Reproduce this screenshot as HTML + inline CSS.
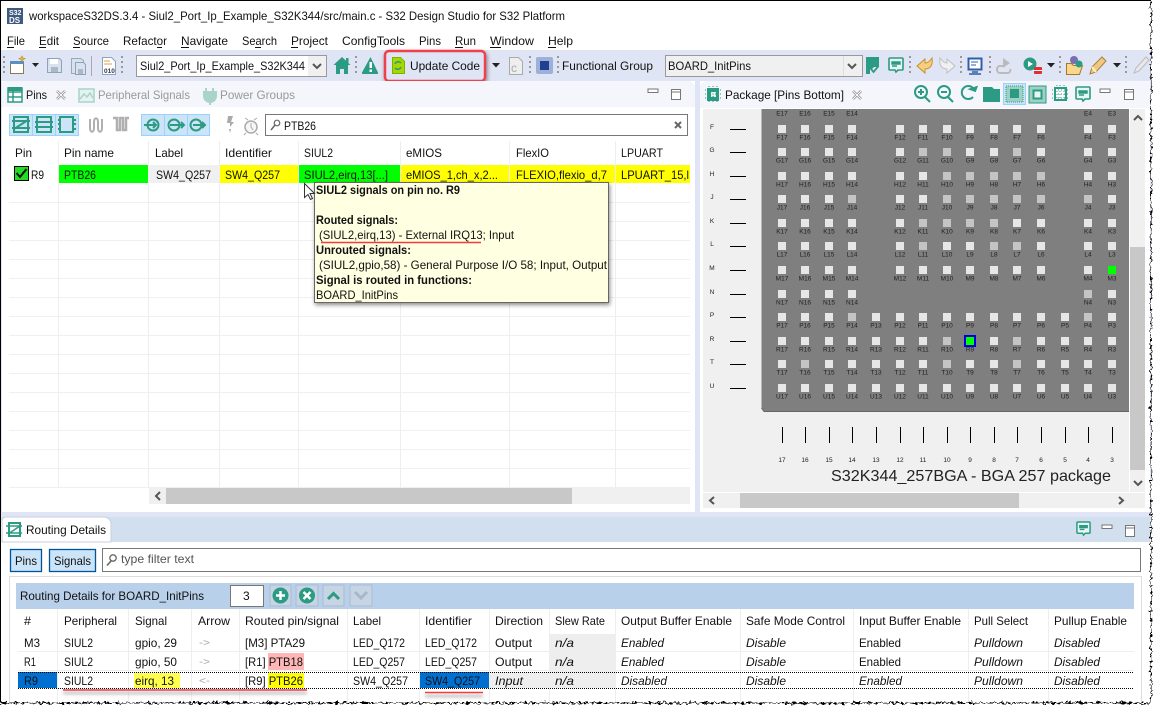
<!DOCTYPE html>
<html><head><meta charset="utf-8"><title>S32 Design Studio</title>
<style>
html,body{margin:0;padding:0;background:#fff;overflow:hidden}
svg{position:absolute;left:0;top:0;display:block}
text{font-family:"Liberation Sans",sans-serif;font-size:12px;fill:#111}
.i{font-style:italic}.b{font-weight:bold}.g{fill:#999}.a{fill:#aaa;font-size:10px}
rect.p{width:8px;height:8px;y:-4px;fill:#e6e6e6}
rect.d{fill:#c4c4c4}
text.l{font-size:6.5px;text-anchor:middle;fill:#222}
.gr{stroke:#999;stroke-width:2;stroke-dasharray:2 3;fill:none}
.t{fill:#2b9b83}.ts{stroke:#2b9b83;fill:none;stroke-width:2}
</style></head><body>
<svg width="1155" height="707" viewBox="0 0 1155 707" xmlns="http://www.w3.org/2000/svg">
<defs>
<filter id="tear" x="-2%" y="-2%" width="104%" height="104%"><feTurbulence type="fractalNoise" baseFrequency="0.3" numOctaves="2" seed="4"/><feDisplacementMap in="SourceGraphic" scale="6" xChannelSelector="R" yChannelSelector="G"/></filter>
<filter id="sh" x="-20%" y="-20%" width="140%" height="150%"><feDropShadow dx="1" dy="2" stdDeviation="2" flood-color="#000" flood-opacity=".45"/></filter>
<filter id="bl" x="-5%" y="-300%" width="110%" height="700%"><feGaussianBlur stdDeviation="1.5"/></filter>
<symbol id="note" viewBox="0 0 16 16" overflow="visible"><path d="M2 1h12a1 1 0 0 1 1 1v10a1 1 0 0 1-1 1H10l-2 2-1-2H2a1 1 0 0 1-1-1V2a1 1 0 0 1 1-1z" fill="#e8f5f2" stroke="#2b9b83" stroke-width="1.6"/><path d="M4 5h8v2H4zM4 9h5" stroke="#2b9b83" stroke-width="1.4" fill="#2b9b83"/></symbol>
</defs>

<!-- background bands -->
<rect width="1155" height="707" fill="#fff"/>
<rect x="0" y="50" width="1155" height="470" fill="#dfe5f4"/>

<!-- title bar -->
<rect x="7" y="8" width="16" height="16" fill="#3d5a80"/>
<text x="9" y="15" style="font-size:7px;fill:#fff;font-weight:bold">S32</text>
<text x="9" y="23" style="font-size:8px;fill:#fff;font-weight:bold">DS</text>
<text x="29" y="20" textLength="536" lengthAdjust="spacingAndGlyphs">workspaceS32DS.3.4 - Siul2_Port_Ip_Example_S32K344/src/main.c - S32 Design Studio for S32 Platform</text>

<!-- menu -->
<text x="7" y="45" textLength="18" lengthAdjust="spacingAndGlyphs">File</text>
<text x="39" y="45" textLength="20" lengthAdjust="spacingAndGlyphs">Edit</text>
<text x="73" y="45" textLength="36" lengthAdjust="spacingAndGlyphs">Source</text>
<text x="123" y="45" textLength="44" lengthAdjust="spacingAndGlyphs">Refactor</text>
<text x="181" y="45" textLength="47" lengthAdjust="spacingAndGlyphs">Navigate</text>
<text x="242" y="45" textLength="35" lengthAdjust="spacingAndGlyphs">Search</text>
<text x="291" y="45" textLength="37" lengthAdjust="spacingAndGlyphs">Project</text>
<text x="342" y="45" textLength="63" lengthAdjust="spacingAndGlyphs">ConfigTools</text>
<text x="419" y="45" textLength="22" lengthAdjust="spacingAndGlyphs">Pins</text>
<text x="455" y="45" textLength="21" lengthAdjust="spacingAndGlyphs">Run</text>
<text x="490" y="45" textLength="44" lengthAdjust="spacingAndGlyphs">Window</text>
<text x="548" y="45" textLength="25" lengthAdjust="spacingAndGlyphs">Help</text>
<path d="M7 47.500h7M39 47.500h7M73 47.500h7M181 47.500h8M291 47.500h7M455 47.500h8M490 47.500h11M548 47.500h8M255 47.500h6M157 47.500h5" stroke="#111"/>

<!-- main toolbar -->
<path class="gr" d="M4 56v20M122 56v20M356 56v20M530 56v20M558 56v20M910 56v20M961 56v20M990 56v20M1060 56v20M1126 56v20"/>
<rect x="10.500" y="61.500" width="13" height="12" fill="#fff" stroke="#8a7a50"/><rect x="10" y="61" width="14" height="3" fill="#5a8fc0"/>
<path d="M22 56l1 2 2 .5-2 1-1 2-1-2-2-1 2-.5z" fill="#f2c040" stroke="#c09020" stroke-width=".7"/>
<path d="M32 63h7l-3.500 4z" fill="#222"/>
<path d="M47.500 58.500h12l2 2v12h-14z" fill="#d8e2ee" stroke="#8fa3b8"/><rect x="50" y="59" width="8" height="5" fill="#fff"/><rect x="51" y="67" width="7" height="5" fill="#aab8c8"/>
<path d="M71.500 58.500h9l3 2v13h-12z" fill="#d8e2ee" stroke="#9aa8b8"/><path d="M75.500 62.500h8l2 2v10h-10z" fill="#d8e2ee" stroke="#8fa3b8"/><rect x="78" y="69" width="5" height="5" fill="#aab8c8"/>
<path d="M91.500 56v20" stroke="#aaa"/>
<path d="M102.500 57.500h9l4 4v13h-13z" fill="#fff" stroke="#8fa3b8"/><text x="104" y="73" style="font-size:6.500px;fill:#335;font-weight:bold">010</text><path d="M104 61h6M104 64h8" stroke="#e0a040"/>
<rect x="136.500" y="55.500" width="190" height="21" fill="#fff" stroke="#999"/><rect x="308" y="56" width="18" height="20" fill="#f0f0f0"/>
<path d="M313 64l4 4 4-4" fill="none" stroke="#555" stroke-width="2"/>
<text x="140" y="70" textLength="165" lengthAdjust="spacingAndGlyphs">Siul2_Port_Ip_Example_S32K344</text>
<path d="M342 57l-8.500 8h2.500v9h4v-5h4v5h4v-9h2.500z" class="t"/><rect x="346" y="58" width="2.500" height="5" class="t"/>
<path d="M370.500 57l7.500 15.500a1 1 0 0 1-1 1.500h-14a1 1 0 0 1-1-1.500z" class="t"/><rect x="369.500" y="62" width="2.500" height="6" fill="#fff"/><rect x="369.500" y="69.500" width="2.500" height="2.500" fill="#fff"/>
<rect x="385" y="51" width="100" height="30" rx="4" fill="#dfe5f4" stroke="#f04050" stroke-width="2.500" filter="url(#sh)"/>
<path d="M392.500 57.500h8l4 4v12h-12z" fill="#a6d800" stroke="#7fb000"/><path d="M395 64a3.500 3.500 0 0 1 6-1M401 67a3.500 3.500 0 0 1-6 1" fill="none" stroke="#2b9b83" stroke-width="1.500"/>
<text x="410" y="70" textLength="70" lengthAdjust="spacingAndGlyphs">Update Code</text>
<path d="M492 63h8l-4 4.500z" fill="#222"/>
<path d="M509.500 57.500h9l4 4v13h-13z" fill="#eee" stroke="#aaa"/><text x="511" y="72" style="font-size:12px;fill:#aaa">c</text>
<rect x="536" y="57" width="17" height="17" rx="2" fill="#9fb0d8"/><rect x="540" y="61" width="9" height="9" fill="#1f3f8f"/>
<text x="562" y="70" textLength="91" lengthAdjust="spacingAndGlyphs">Functional Group</text>
<rect x="665.500" y="55.500" width="197" height="21" fill="#f0f0f0" stroke="#999"/><path d="M843.500 56v20" stroke="#ddd"/>
<path d="M848 64l4 4 4-4" fill="none" stroke="#555" stroke-width="2"/>
<text x="668" y="70" textLength="83" lengthAdjust="spacingAndGlyphs">BOARD_InitPins</text>
<path d="M866 57h13v10h-5l-3 3-1-1v5h-4z" class="t"/><path d="M871 69l2.500 3 5-6" stroke="#2b9b83" fill="none" stroke-width="1.800"/>
<use href="#note" x="888" y="57" width="16" height="16"/>
<path d="M932 58c1 6-1 11-7 11v4l-8-7 8-7v4c3 0 5-2 7-5z" fill="#f6cf7a" stroke="#c89030"/>
<path d="M940 58c-1 6 1 11 7 11v4l8-7-8-7v4c-3 0-5-2-7-5z" fill="#f0f0f0" stroke="#c0c0c0"/>
<rect x="968.500" y="58.500" width="13" height="11" fill="#fff" stroke="#2f5fa8" stroke-width="2"/><path d="M971 62h7M971 65h5" stroke="#2f5fa8"/><path d="M972 72h6M969 74h12" stroke="#2f5fa8" stroke-width="1.500"/>
<path d="M1003 58l7 5-7 5z" fill="#bbb"/><path d="M1003 66h-3c-4 0-4 7 0 7h7c3 0 4-2 3-4" fill="none" stroke="#bbb" stroke-width="2"/>
<circle cx="1030" cy="64" r="6.500" fill="#2b9b83"/><path d="M1028 61l5 3-5 3z" fill="#fff"/><rect x="1034" y="67" width="8" height="7" rx="1" fill="#e03030"/><path d="M1034 70.500h8" stroke="#fff"/>
<path d="M1047 63h8l-4 4.500z" fill="#222"/>
<path d="M1066.500 63.500h5l2 2h9l-3 9h-13z" fill="#f8d88a" stroke="#a87828"/><circle cx="1074" cy="60" r="4" fill="#7a6fb0"/><circle cx="1079" cy="64" r="3.500" fill="#2b9b83"/>
<path d="M1102 57l4 4-10 11-6 2 2-7z" fill="#f0c880" stroke="#a88040"/><path d="M1092 67l4 5" stroke="#fff2c0" stroke-width="2"/>
<path d="M1113 63h8l-4 4.500z" fill="#222"/>
<path d="M1146 57l3 3-10 11-5 2 2-5z" fill="#e8e8e8" stroke="#bbb"/>

<!-- Pins panel -->
<rect x="2" y="81" width="693" height="431" fill="#fff"/>
<path d="M2 107V85a4 4 0 0 1 4-4H688a7 7 0 0 1 7 7V107z" fill="#f4f6fc"/>
<rect x="8" y="88" width="14" height="14" fill="#fff" stroke="#2b9b83" stroke-width="1.500"/><path d="M8 92h14M8 97h14M13 88v14" stroke="#2b9b83" stroke-width="1.500"/><rect x="8" y="87" width="14" height="4" class="t"/>
<text x="26" y="99" textLength="21" lengthAdjust="spacingAndGlyphs">Pins</text>
<path d="M57 91l8 8M65 91l-8 8" stroke="#888" stroke-width="2.500"/><path d="M57 91l8 8M65 91l-8 8" stroke="#fff" stroke-width="1"/>
<rect x="79" y="89" width="15" height="13" fill="#e6f2ef" stroke="#a8d4ca" stroke-width="1.500"/><path d="M80 99l4-5 3 3 3-4 3 5" fill="none" stroke="#a8d4ca" stroke-width="1.500"/>
<text x="98" y="99" class="g" textLength="92" lengthAdjust="spacingAndGlyphs">Peripheral Signals</text>
<path d="M206 88v5M213 88v5M204 92h12v4a6 6 0 0 1-12 0zM210 102v3" stroke="#a8d4ca" stroke-width="2" fill="#a8d4ca"/>
<text x="220" y="99" class="g" textLength="75" lengthAdjust="spacingAndGlyphs">Power Groups</text>
<rect x="648" y="89" width="10" height="3.500" fill="#fff" stroke="#777"/>
<rect x="671.500" y="89.500" width="9" height="10" fill="#fff" stroke="#777"/><path d="M671 92h10" stroke="#777"/>

<!-- pins toolbar -->
<rect x="9.500" y="114.500" width="69" height="21" fill="#cce4f7" stroke="#99d1ff"/>
<path d="M32.500 114v22M55.500 114v22" stroke="#99d1ff"/>
<rect x="14" y="117" width="14" height="15" fill="none" stroke="#2b9b83" stroke-width="2"/><path d="M12 121h18M12 128h18M14 129l14-9" stroke="#2b9b83" stroke-width="2"/>
<rect x="37" y="117" width="14" height="15" fill="none" stroke="#2b9b83" stroke-width="2"/><path d="M35 122h18M35 127h18" stroke="#2b9b83" stroke-width="2"/>
<rect x="60" y="117" width="13" height="15" fill="none" stroke="#2b9b83" stroke-width="2"/><path d="M58 120h2M58 124h2M58 129h2M73 120h3M73 124h3M73 129h3" stroke="#2b9b83" stroke-width="2"/>
<path d="M90 119v9c0 5 4 5 4 0v-6c0-5 4-5 4 0v6c0 5 4 5 4 0v-9" fill="none" stroke="#b0b0b0" stroke-width="2"/>
<path d="M113 118h4v12h3v-12h3v12h3v-12h3" fill="none" stroke="#b0b0b0" stroke-width="2.500"/>
<rect x="141.500" y="114.500" width="68" height="21" fill="#cce4f7" stroke="#99d1ff"/>
<path d="M164.500 114v22M187.500 114v22" stroke="#99d1ff"/>
<circle cx="153" cy="125" r="5.500" class="ts"/><path d="M144 125h12M153 122l3 3-3 3" class="ts" stroke-width="1.500"/>
<circle cx="174" cy="125" r="5.500" class="ts"/><path d="M170 125h14M181 122l3 3-3 3" class="ts" stroke-width="1.500"/>
<circle cx="196" cy="125" r="5.500" class="ts"/><path d="M193 125h12M202 122l3 3-3 3" class="ts" stroke-width="1.500"/>
<path d="M228 116h5l-2 6h3l-4 5v-4h-3zM229 129l1 4 1-4z" fill="#aaa"/>
<circle cx="251" cy="127" r="6" fill="#f6f6f6" stroke="#aaa" stroke-width="1.500"/><path d="M251 123v4l2 3M245 118l3 2M257 118l-3 2M246 133l-2 2M256 133l2 2" stroke="#aaa" fill="none"/>
<rect x="265.500" y="114.500" width="422" height="21" fill="#fff" stroke="#777"/>
<circle cx="277" cy="123" r="2.800" fill="none" stroke="#666" stroke-width="1.200"/><path d="M275 125l-4 5" stroke="#666" stroke-width="1.500"/>
<text x="284" y="130" textLength="32" lengthAdjust="spacingAndGlyphs">PTB26</text>
<path d="M675 122l6 6M681 122l-6 6" stroke="#666" stroke-width="2"/>

<!-- pins table -->
<path d="M9 202.500H690M9 221.500H690M9 240.500H690M9 259.500H690M9 278.500H690M9 297.500H690M9 316.500H690M9 335.500H690M9 354.500H690M9 373.500H690M9 392.500H690M9 411.500H690M9 430.500H690M9 449.500H690M9 468.500H690M9 487.500H690" stroke="#f0f0f0"/>
<path d="M58.500 141V488M148.500 141V488M219.500 141V488M298.500 141V488M400.500 141V488M509.500 141V488M615.500 141V488" stroke="#eee"/>
<text x="15" y="157" textLength="17" lengthAdjust="spacingAndGlyphs">Pin</text>
<text x="64" y="157" textLength="50" lengthAdjust="spacingAndGlyphs">Pin name</text>
<text x="155" y="157" textLength="28" lengthAdjust="spacingAndGlyphs">Label</text>
<text x="225" y="157" textLength="47" lengthAdjust="spacingAndGlyphs">Identifier</text>
<text x="304" y="157" textLength="29" lengthAdjust="spacingAndGlyphs">SIUL2</text>
<text x="406" y="157" textLength="36" lengthAdjust="spacingAndGlyphs">eMIOS</text>
<text x="516" y="157" textLength="33" lengthAdjust="spacingAndGlyphs">FlexIO</text>
<text x="621" y="157" textLength="42" lengthAdjust="spacingAndGlyphs">LPUART</text>
<rect x="59" y="165" width="89" height="18" fill="#00ff00"/>
<rect x="149" y="165" width="70" height="18" fill="#f0f0f0"/>
<rect x="220" y="165" width="78" height="18" fill="#ffff00"/>
<rect x="299" y="165" width="101" height="18" fill="#00ff00"/>
<rect x="401" y="165" width="108" height="18" fill="#ffff00"/>
<rect x="510" y="165" width="105" height="18" fill="#ffff00"/>
<rect x="616" y="165" width="74" height="18" fill="#ffff00"/>
<rect x="14.500" y="166.500" width="14" height="14" fill="#22dd22" stroke="#000"/>
<path d="M16.500 173l3.500 4 6.500-8" fill="none" stroke="#111" stroke-width="2"/>
<text x="31" y="179" textLength="13" lengthAdjust="spacingAndGlyphs">R9</text>
<text x="64" y="179" textLength="32" lengthAdjust="spacingAndGlyphs">PTB26</text>
<text x="156" y="179" textLength="55" lengthAdjust="spacingAndGlyphs">SW4_Q257</text>
<text x="225" y="179" textLength="55" lengthAdjust="spacingAndGlyphs">SW4_Q257</text>
<text x="304" y="179" textLength="84" lengthAdjust="spacingAndGlyphs">SIUL2,eirq,13[...]</text>
<text x="406" y="179" textLength="92" lengthAdjust="spacingAndGlyphs">eMIOS_1,ch_x,2...</text>
<text x="516" y="179" textLength="91" lengthAdjust="spacingAndGlyphs">FLEXIO,flexio_d,7</text>
<text x="621" y="179" textLength="68" lengthAdjust="spacingAndGlyphs">LPUART_15,l</text>

<!-- tooltip -->
<rect x="314.500" y="182.500" width="294" height="120" fill="#ffffe1" stroke="#666" filter="url(#sh)"/>
<text x="316" y="194" class="b" textLength="144" lengthAdjust="spacingAndGlyphs">SIUL2 signals on pin no. R9</text>
<text x="316" y="224" class="b" textLength="82" lengthAdjust="spacingAndGlyphs">Routed signals:</text>
<text x="319" y="239" textLength="195" lengthAdjust="spacingAndGlyphs">(SIUL2,eirq,13) - External IRQ13; Input</text>
<path d="M321 245H481" stroke="#aaa" stroke-width="2" filter="url(#bl)"/>
<path d="M321 242.500H481" stroke="#f43c3c" stroke-width="1.500"/>
<text x="316" y="254" class="b" textLength="95" lengthAdjust="spacingAndGlyphs">Unrouted signals:</text>
<text x="319" y="269" textLength="288" lengthAdjust="spacingAndGlyphs">(SIUL2,gpio,58) - General Purpose I/O 58; Input, Output</text>
<text x="316" y="284" class="b" textLength="156" lengthAdjust="spacingAndGlyphs">Signal is routed in functions:</text>
<text x="316" y="299" textLength="82" lengthAdjust="spacingAndGlyphs">BOARD_InitPins</text>
<path d="M304.500 183.500v14l3.500-3 2.500 5 2-1-2.500-5h4.500z" fill="#fff" stroke="#333"/>

<!-- pins hscroll -->
<rect x="149" y="488" width="541" height="16" fill="#f0f0f0"/>
<rect x="166" y="488" width="406" height="16" fill="#c8c8c8"/>
<path d="M160 492l-4 4 4 4" fill="none" stroke="#555" stroke-width="2"/>

<!-- Package panel -->
<rect x="700" y="81" width="450" height="431" fill="#fff"/>
<path d="M700 108V88a7 7 0 0 1 7-7H1150V108z" fill="#f4f6fc"/>
<rect x="707" y="88" width="12" height="13" fill="#2b9b83"/><rect x="711" y="92" width="5" height="5" fill="#e8f5f2"/><path d="M705 90h16M705 94h16M705 98h16M709 86v17M713 86v17M717 86v17" stroke="#2b9b83" stroke-dasharray="1 1.500" fill="none"/>
<text x="725" y="99" textLength="119" lengthAdjust="spacingAndGlyphs">Package [Pins Bottom]</text>
<path d="M853 91l8 8M861 91l-8 8" stroke="#888" stroke-width="2.500"/><path d="M853 91l8 8M861 91l-8 8" stroke="#fff"/>
<circle cx="921" cy="92" r="6" class="ts" stroke-width="2.500"/><path d="M918 92h6M921 89v6" class="ts" stroke-width="1.800"/><path d="M925 97l5 5" class="ts" stroke-width="3"/>
<circle cx="944" cy="92" r="6" class="ts" stroke-width="2.500"/><path d="M941 92h6" class="ts" stroke-width="1.800"/><path d="M948 97l5 5" class="ts" stroke-width="3"/>
<path d="M973 97a6.500 6.500 0 1 1 0-9" class="ts" stroke-width="3"/><path d="M968 91h9v-7z" transform="rotate(20 973 88)" class="t"/>
<path d="M983 87h9l2 2h6v13h-17z" class="t"/>
<rect x="1003.500" y="83.500" width="22" height="21" fill="#cce4f7" stroke="#99d1ff"/>
<rect x="1006" y="86" width="17" height="16" fill="#9fd0c4" stroke="#2b9b83" stroke-dasharray="1 1"/><rect x="1010" y="89" width="9" height="9" class="t"/>
<rect x="1029" y="86" width="17" height="17" fill="#9fd0c4" stroke="#2b9b83"/><rect x="1033.500" y="90.500" width="8" height="8" fill="#e8f5f2" stroke="#2b9b83" stroke-width="2"/>
<rect x="1055" y="88" width="11" height="12" fill="#fff" stroke="#2b9b83" stroke-width="2"/><path d="M1052 90h16M1052 94h16M1052 98h16M1057 85v18M1060 85v18M1064 85v18" stroke="#2b9b83" stroke-dasharray="1 2" fill="none"/>
<use href="#note" x="1075" y="86" width="16" height="16"/>
<rect x="1100" y="89" width="10" height="3.500" fill="#fff" stroke="#777"/>
<rect x="1124.500" y="89.500" width="9" height="10" fill="#fff" stroke="#777"/><path d="M1124 92h10" stroke="#777"/>

<rect x="703" y="109" width="426" height="383" fill="#f0f0f0"/>
<path d="M761.500 109H1129V411.500H764l-2.500-3z" fill="#7f7f7f"/>
<path d="M761.500 408l2.500 3.500H1129" stroke="#666" fill="none"/>

<!-- row labels & dashes -->
<path d="M730 129.500h16M730 152.500h16M730 176.500h16M730 199.500h16M730 223.500h16M730 246.500h16M730 270.500h16M730 294.500h16M730 317.500h16M730 341.500h16M730 364.500h16M730 388.500h16" stroke="#000"/>
<g style="text-anchor:middle">
<text class="l" x="712" y="129" fill="#666">F</text><text class="l" x="712" y="152">G</text><text class="l" x="712" y="176">H</text><text class="l" x="712" y="199">J</text><text class="l" x="712" y="223">K</text><text class="l" x="712" y="246">L</text><text class="l" x="712" y="270">M</text><text class="l" x="712" y="294">N</text><text class="l" x="712" y="317">P</text><text class="l" x="712" y="341">R</text><text class="l" x="712" y="364">T</text><text class="l" x="712" y="388">U</text>
</g>
<!-- E labels -->
<g transform="translate(0,105)"><text class="l" x="782" y="10.500">E17</text><text class="l" x="805" y="10.500">E16</text><text class="l" x="829" y="10.500">E15</text><text class="l" x="852" y="10.500">E14</text><text class="l" x="1088" y="10.500">E4</text><text class="l" x="1112" y="10.500">E3</text></g>

<g transform="translate(0,129)">
<rect class="p" x="778"/><text class="l" x="782" y="10.500">F17</text><rect class="p" x="801"/><text class="l" x="805" y="10.500">F16</text><rect class="p" x="825"/><text class="l" x="829" y="10.500">F15</text><rect class="p" x="848"/><text class="l" x="852" y="10.500">F14</text>
<rect class="p" x="896"/><text class="l" x="900" y="10.500">F12</text><rect class="p" x="919"/><text class="l" x="923" y="10.500">F11</text><rect class="p" x="943"/><text class="l" x="947" y="10.500">F10</text><rect class="p" x="966"/><text class="l" x="970" y="10.500">F9</text><rect class="p" x="990"/><text class="l" x="994" y="10.500">F8</text><rect class="p" x="1013"/><text class="l" x="1017" y="10.500">F7</text><rect class="p" x="1037"/><text class="l" x="1041" y="10.500">F6</text>
<rect class="p" x="1084"/><text class="l" x="1088" y="10.500">F4</text><rect class="p" x="1108"/><text class="l" x="1112" y="10.500">F3</text>
</g>
<g transform="translate(0,152)">
<rect class="p" x="778"/><text class="l" x="782" y="10.500">G17</text><rect class="p" x="801"/><text class="l" x="805" y="10.500">G16</text><rect class="p" x="825"/><text class="l" x="829" y="10.500">G15</text><rect class="p" x="848"/><text class="l" x="852" y="10.500">G14</text>
<rect class="p" x="896"/><text class="l" x="900" y="10.500">G12</text><rect class="p d" x="919"/><text class="l" x="923" y="10.500">G11</text><rect class="p d" x="943"/><text class="l" x="947" y="10.500">G10</text><rect class="p" x="966"/><text class="l" x="970" y="10.500">G9</text><rect class="p" x="990"/><text class="l" x="994" y="10.500">G8</text><rect class="p d" x="1013"/><text class="l" x="1017" y="10.500">G7</text><rect class="p" x="1037"/><text class="l" x="1041" y="10.500">G6</text>
<rect class="p" x="1084"/><text class="l" x="1088" y="10.500">G4</text><rect class="p" x="1108"/><text class="l" x="1112" y="10.500">G3</text>
</g>
<g transform="translate(0,176)">
<rect class="p" x="778"/><text class="l" x="782" y="10.500">H17</text><rect class="p" x="801"/><text class="l" x="805" y="10.500">H16</text><rect class="p" x="825"/><text class="l" x="829" y="10.500">H15</text><rect class="p" x="848"/><text class="l" x="852" y="10.500">H14</text>
<rect class="p" x="896"/><text class="l" x="900" y="10.500">H12</text><rect class="p" x="919"/><text class="l" x="923" y="10.500">H11</text><rect class="p d" x="943"/><text class="l" x="947" y="10.500">H10</text><rect class="p d" x="966"/><text class="l" x="970" y="10.500">H9</text><rect class="p d" x="990"/><text class="l" x="994" y="10.500">H8</text><rect class="p d" x="1013"/><text class="l" x="1017" y="10.500">H7</text><rect class="p d" x="1037"/><text class="l" x="1041" y="10.500">H6</text>
<rect class="p" x="1084"/><text class="l" x="1088" y="10.500">H4</text><rect class="p" x="1108"/><text class="l" x="1112" y="10.500">H3</text>
</g>
<g transform="translate(0,199)">
<rect class="p" x="778"/><text class="l" x="782" y="10.500">J17</text><rect class="p" x="801"/><text class="l" x="805" y="10.500">J16</text><rect class="p" x="825"/><text class="l" x="829" y="10.500">J15</text><rect class="p d" x="848"/><text class="l" x="852" y="10.500">J14</text>
<rect class="p" x="896"/><text class="l" x="900" y="10.500">J12</text><rect class="p" x="919"/><text class="l" x="923" y="10.500">J11</text><rect class="p d" x="943"/><text class="l" x="947" y="10.500">J10</text><rect class="p d" x="966"/><text class="l" x="970" y="10.500">J9</text><rect class="p d" x="990"/><text class="l" x="994" y="10.500">J8</text><rect class="p d" x="1013"/><text class="l" x="1017" y="10.500">J7</text><rect class="p d" x="1037"/><text class="l" x="1041" y="10.500">J6</text>
<rect class="p d" x="1084"/><text class="l" x="1088" y="10.500">J4</text><rect class="p" x="1108"/><text class="l" x="1112" y="10.500">J3</text>
</g>
<g transform="translate(0,223)">
<rect class="p" x="778"/><text class="l" x="782" y="10.500">K17</text><rect class="p" x="801"/><text class="l" x="805" y="10.500">K16</text><rect class="p" x="825"/><text class="l" x="829" y="10.500">K15</text><rect class="p" x="848"/><text class="l" x="852" y="10.500">K14</text>
<rect class="p" x="896"/><text class="l" x="900" y="10.500">K12</text><rect class="p d" x="919"/><text class="l" x="923" y="10.500">K11</text><rect class="p d" x="943"/><text class="l" x="947" y="10.500">K10</text><rect class="p d" x="966"/><text class="l" x="970" y="10.500">K9</text><rect class="p d" x="990"/><text class="l" x="994" y="10.500">K8</text><rect class="p" x="1013"/><text class="l" x="1017" y="10.500">K7</text><rect class="p" x="1037"/><text class="l" x="1041" y="10.500">K6</text>
<rect class="p" x="1084"/><text class="l" x="1088" y="10.500">K4</text><rect class="p" x="1108"/><text class="l" x="1112" y="10.500">K3</text>
</g>
<g transform="translate(0,246)">
<rect class="p" x="778"/><text class="l" x="782" y="10.500">L17</text><rect class="p" x="801"/><text class="l" x="805" y="10.500">L16</text><rect class="p" x="825"/><text class="l" x="829" y="10.500">L15</text><rect class="p" x="848"/><text class="l" x="852" y="10.500">L14</text>
<rect class="p" x="896"/><text class="l" x="900" y="10.500">L12</text><rect class="p d" x="919"/><text class="l" x="923" y="10.500">L11</text><rect class="p" x="943"/><text class="l" x="947" y="10.500">L10</text><rect class="p" x="966"/><text class="l" x="970" y="10.500">L9</text><rect class="p d" x="990"/><text class="l" x="994" y="10.500">L8</text><rect class="p d" x="1013"/><text class="l" x="1017" y="10.500">L7</text><rect class="p" x="1037"/><text class="l" x="1041" y="10.500">L6</text>
<rect class="p" x="1084"/><text class="l" x="1088" y="10.500">L4</text><rect class="p" x="1108"/><text class="l" x="1112" y="10.500">L3</text>
</g>
<g transform="translate(0,270)">
<rect class="p" x="778"/><text class="l" x="782" y="10.500">M17</text><rect class="p" x="801"/><text class="l" x="805" y="10.500">M16</text><rect class="p" x="825"/><text class="l" x="829" y="10.500">M15</text><rect class="p" x="848"/><text class="l" x="852" y="10.500">M14</text>
<rect class="p" x="896"/><text class="l" x="900" y="10.500">M12</text><rect class="p" x="919"/><text class="l" x="923" y="10.500">M11</text><rect class="p" x="943"/><text class="l" x="947" y="10.500">M10</text><rect class="p" x="966"/><text class="l" x="970" y="10.500">M9</text><rect class="p" x="990"/><text class="l" x="994" y="10.500">M8</text><rect class="p" x="1013"/><text class="l" x="1017" y="10.500">M7</text><rect class="p" x="1037"/><text class="l" x="1041" y="10.500">M6</text>
<rect class="p" x="1084"/><text class="l" x="1088" y="10.500">M4</text><rect class="p" x="1108" style="fill:#00ff00"/><text class="l" x="1112" y="10.500">M3</text>
</g>
<g transform="translate(0,294)">
<rect class="p" x="778"/><text class="l" x="782" y="10.500">N17</text><rect class="p" x="801"/><text class="l" x="805" y="10.500">N16</text><rect class="p" x="825"/><text class="l" x="829" y="10.500">N15</text><rect class="p" x="848"/><text class="l" x="852" y="10.500">N14</text>
<rect class="p d" x="1084"/><text class="l" x="1088" y="10.500">N4</text><rect class="p" x="1108"/><text class="l" x="1112" y="10.500">N3</text>
</g>
<g transform="translate(0,317)">
<rect class="p" x="778"/><text class="l" x="782" y="10.500">P17</text><rect class="p" x="801"/><text class="l" x="805" y="10.500">P16</text><rect class="p" x="825"/><text class="l" x="829" y="10.500">P15</text><rect class="p d" x="848"/><text class="l" x="852" y="10.500">P14</text><rect class="p" x="872"/><text class="l" x="876" y="10.500">P13</text>
<rect class="p" x="896"/><text class="l" x="900" y="10.500">P12</text><rect class="p" x="919"/><text class="l" x="923" y="10.500">P11</text><rect class="p" x="943"/><text class="l" x="947" y="10.500">P10</text><rect class="p" x="966"/><text class="l" x="970" y="10.500">P9</text><rect class="p" x="990"/><text class="l" x="994" y="10.500">P8</text><rect class="p" x="1013"/><text class="l" x="1017" y="10.500">P7</text><rect class="p" x="1037"/><text class="l" x="1041" y="10.500">P6</text><rect class="p" x="1061"/><text class="l" x="1065" y="10.500">P5</text>
<rect class="p d" x="1084"/><text class="l" x="1088" y="10.500">P4</text><rect class="p" x="1108"/><text class="l" x="1112" y="10.500">P3</text>
</g>
<g transform="translate(0,341)">
<rect class="p" x="778"/><text class="l" x="782" y="10.500">R17</text><rect class="p" x="801"/><text class="l" x="805" y="10.500">R16</text><rect class="p" x="825"/><text class="l" x="829" y="10.500">R15</text><rect class="p" x="848"/><text class="l" x="852" y="10.500">R14</text><rect class="p" x="872"/><text class="l" x="876" y="10.500">R13</text>
<rect class="p" x="896"/><text class="l" x="900" y="10.500">R12</text><rect class="p" x="919"/><text class="l" x="923" y="10.500">R11</text><rect class="p d" x="943"/><text class="l" x="947" y="10.500">R10</text>
<rect x="965" y="-5" width="10" height="10" fill="#00ff00" stroke="#0000e0" stroke-width="2"/><text class="l" x="970" y="10.500">R9</text>
<rect class="p" x="990"/><text class="l" x="994" y="10.500">R8</text><rect class="p d" x="1013"/><text class="l" x="1017" y="10.500">R7</text><rect class="p" x="1037"/><text class="l" x="1041" y="10.500">R6</text><rect class="p" x="1061"/><text class="l" x="1065" y="10.500">R5</text>
<rect class="p" x="1084"/><text class="l" x="1088" y="10.500">R4</text><rect class="p" x="1108"/><text class="l" x="1112" y="10.500">R3</text>
</g>
<g transform="translate(0,364)">
<rect class="p" x="778"/><text class="l" x="782" y="10.500">T17</text><rect class="p d" x="801"/><text class="l" x="805" y="10.500">T16</text><rect class="p" x="825"/><text class="l" x="829" y="10.500">T15</text><rect class="p" x="848"/><text class="l" x="852" y="10.500">T14</text><rect class="p" x="872"/><text class="l" x="876" y="10.500">T13</text>
<rect class="p" x="896"/><text class="l" x="900" y="10.500">T12</text><rect class="p" x="919"/><text class="l" x="923" y="10.500">T11</text><rect class="p d" x="943"/><text class="l" x="947" y="10.500">T10</text><rect class="p" x="966"/><text class="l" x="970" y="10.500">T9</text><rect class="p" x="990"/><text class="l" x="994" y="10.500">T8</text><rect class="p d" x="1013"/><text class="l" x="1017" y="10.500">T7</text><rect class="p" x="1037"/><text class="l" x="1041" y="10.500">T6</text><rect class="p" x="1061"/><text class="l" x="1065" y="10.500">T5</text>
<rect class="p" x="1084"/><text class="l" x="1088" y="10.500">T4</text><rect class="p" x="1108"/><text class="l" x="1112" y="10.500">T3</text>
</g>
<g transform="translate(0,388)">
<rect class="p" x="778"/><text class="l" x="782" y="10.500">U17</text><rect class="p" x="801"/><text class="l" x="805" y="10.500">U16</text><rect class="p" x="825"/><text class="l" x="829" y="10.500">U15</text><rect class="p" x="848"/><text class="l" x="852" y="10.500">U14</text><rect class="p" x="872"/><text class="l" x="876" y="10.500">U13</text>
<rect class="p" x="896"/><text class="l" x="900" y="10.500">U12</text><rect class="p" x="919"/><text class="l" x="923" y="10.500">U11</text><rect class="p" x="943"/><text class="l" x="947" y="10.500">U10</text><rect class="p" x="966"/><text class="l" x="970" y="10.500">U9</text><rect class="p" x="990"/><text class="l" x="994" y="10.500">U8</text><rect class="p" x="1013"/><text class="l" x="1017" y="10.500">U7</text><rect class="p" x="1037"/><text class="l" x="1041" y="10.500">U6</text><rect class="p" x="1061"/><text class="l" x="1065" y="10.500">U5</text>
<rect class="p" x="1084"/><text class="l" x="1088" y="10.500">U4</text><rect class="p" x="1108"/><text class="l" x="1112" y="10.500">U3</text>
</g>

<!-- bottom ticks -->
<path d="M782.500 427v16M805.500 427v16M829.500 427v16M852.500 427v16M876.500 427v16M900.500 427v16M923.500 427v16M947.500 427v16M970.500 427v16M994.500 427v16M1017.500 427v16M1041.500 427v16M1065.500 427v16M1088.500 427v16M1112.500 427v16" stroke="#000"/>
<text class="l" x="782" y="462">17</text><text class="l" x="805" y="462">16</text><text class="l" x="829" y="462">15</text><text class="l" x="852" y="462">14</text><text class="l" x="876" y="462">13</text><text class="l" x="900" y="462">12</text><text class="l" x="923" y="462">11</text><text class="l" x="947" y="462">10</text><text class="l" x="970" y="462">9</text><text class="l" x="994" y="462">8</text><text class="l" x="1017" y="462">7</text><text class="l" x="1041" y="462">6</text><text class="l" x="1065" y="462">5</text><text class="l" x="1088" y="462">4</text><text class="l" x="1112" y="462">3</text>
<text x="831" y="481" style="font-size:16px;fill:#222" textLength="280" lengthAdjust="spacingAndGlyphs">S32K344_257BGA - BGA 257 package</text>

<!-- package scrollbars -->
<rect x="1130" y="109" width="15" height="383" fill="#f0f0f0"/>
<rect x="1130" y="247" width="15" height="223" fill="#c8c8c8"/>
<path d="M1134 120l4-4 4 4M1134 481l4 4 4-4" fill="none" stroke="#555" stroke-width="2"/>
<rect x="703" y="493" width="442" height="15" fill="#f0f0f0"/>
<rect x="740" y="493" width="279" height="15" fill="#c8c8c8"/>
<path d="M714 497l-4 3.500 4 3.500M1119 497l4 3.500-4 3.500" fill="none" stroke="#555" stroke-width="2"/>

<!-- Routing Details panel -->
<rect x="2" y="517" width="1148" height="190" fill="#fff"/>
<rect x="2" y="517" width="1148" height="25" fill="#d1dfee"/>
<path d="M2 542V521a4 4 0 0 1 4-4H104a7 7 0 0 1 7 7V542z" fill="#fff" stroke="#c8d0dc"/>
<rect x="9" y="523" width="11" height="13" fill="none" stroke="#2b9b83" stroke-width="2"/><path d="M6 526h16M6 533h16M8 534l12-8" stroke="#2b9b83" stroke-width="1.500"/>
<text x="26" y="534" textLength="80" lengthAdjust="spacingAndGlyphs">Routing Details</text>
<use href="#note" x="1076" y="521" width="15" height="15"/>
<rect x="1102" y="525" width="10" height="3.500" fill="#fff" stroke="#777"/>
<rect x="1125.500" y="525.500" width="9" height="11" fill="#fff" stroke="#777"/><path d="M1125 528h10" stroke="#777"/>

<rect x="10.500" y="549.500" width="31" height="22" fill="#cce4f7" stroke="#005499" stroke-width="1.300"/>
<text x="15" y="565" textLength="22" lengthAdjust="spacingAndGlyphs">Pins</text>
<rect x="49.500" y="549.500" width="46" height="22" fill="#cce4f7" stroke="#005499" stroke-width="1.300"/>
<text x="54" y="565" textLength="37" lengthAdjust="spacingAndGlyphs">Signals</text>
<rect x="102.500" y="548.500" width="1038" height="23" fill="#fff" stroke="#777"/>
<circle cx="113" cy="558" r="3.200" fill="none" stroke="#666" stroke-width="1.300"/><path d="M111 561l-4 4.500" stroke="#666" stroke-width="1.600"/>
<text x="121" y="563" style="fill:#555" textLength="73" lengthAdjust="spacingAndGlyphs">type filter text</text>

<path d="M9.500 707V576.500H1141.500V707" fill="none" stroke="#ddd"/>
<rect x="16" y="583" width="1118" height="26" fill="#b9d0ea"/>
<text x="20" y="600" textLength="184" lengthAdjust="spacingAndGlyphs">Routing Details for BOARD_InitPins</text>
<rect x="230.500" y="585.500" width="33" height="21" fill="#fff" stroke="#777"/>
<text x="243" y="600">3</text>
<rect x="270" y="585" width="21" height="21" fill="#c6d4e4" stroke="#aabbd0"/><circle cx="280.500" cy="595.500" r="8" class="t"/><path d="M276 595.500h9M280.500 591v9" stroke="#fff" stroke-width="2.500"/>
<rect x="296" y="585" width="22" height="21" fill="#c6d4e4" stroke="#aabbd0"/><circle cx="307" cy="595.500" r="8" class="t"/><path d="M303.500 592l7 7M310.500 592l-7 7" stroke="#fff" stroke-width="2.500"/>
<rect x="323" y="585" width="21" height="21" fill="#c6d4e4" stroke="#aabbd0"/><path d="M328 599l5.500-5.500 5.500 5.500" fill="none" stroke="#2b9b83" stroke-width="3"/>
<rect x="350" y="585" width="22" height="21" fill="#c6d4e4" stroke="#aabbd0"/><path d="M355 592l6 6 6-6" fill="none" stroke="#a8b8c8" stroke-width="3"/>

<!-- routing table -->
<rect x="550" y="634" width="65" height="54" fill="#eee"/>
<rect x="490" y="672" width="59" height="16" fill="#eee"/>
<path d="M18 651.500H1134M18 670.500H1134" stroke="#eee"/>
<path d="M57.500 609V707M128.500 609V707M191.500 609V707M239.500 609V707M347.500 609V707M419.500 609V707M489.500 609V707M549.500 609V707M615.500 609V707M740.500 609V707M853.500 609V707M968.500 609V707M1048.500 609V707" stroke="#eee"/>
<text x="24" y="625" textLength="7" lengthAdjust="spacingAndGlyphs">#</text>
<text x="64" y="625" textLength="53" lengthAdjust="spacingAndGlyphs">Peripheral</text>
<text x="135" y="625" textLength="32" lengthAdjust="spacingAndGlyphs">Signal</text>
<text x="198" y="625" textLength="32" lengthAdjust="spacingAndGlyphs">Arrow</text>
<text x="245" y="625" textLength="94" lengthAdjust="spacingAndGlyphs">Routed pin/signal</text>
<text x="353" y="625" textLength="28" lengthAdjust="spacingAndGlyphs">Label</text>
<text x="425" y="625" textLength="47" lengthAdjust="spacingAndGlyphs">Identifier</text>
<text x="495" y="625" textLength="48" lengthAdjust="spacingAndGlyphs">Direction</text>
<text x="555" y="625" textLength="50" lengthAdjust="spacingAndGlyphs">Slew Rate</text>
<text x="621" y="625" textLength="111" lengthAdjust="spacingAndGlyphs">Output Buffer Enable</text>
<text x="746" y="625" textLength="99" lengthAdjust="spacingAndGlyphs">Safe Mode Control</text>
<text x="859" y="625" textLength="102" lengthAdjust="spacingAndGlyphs">Input Buffer Enable</text>
<text x="974" y="625" textLength="54" lengthAdjust="spacingAndGlyphs">Pull Select</text>
<text x="1054" y="625" textLength="73" lengthAdjust="spacingAndGlyphs">Pullup Enable</text>

<text x="24" y="647" textLength="16" lengthAdjust="spacingAndGlyphs">M3</text>
<text x="64" y="647" textLength="29" lengthAdjust="spacingAndGlyphs">SIUL2</text>
<text x="135" y="647" textLength="42" lengthAdjust="spacingAndGlyphs">gpio, 29</text>
<text x="199" y="646" class="a" textLength="11" lengthAdjust="spacingAndGlyphs">-&gt;</text>
<text x="245" y="647" textLength="60" lengthAdjust="spacingAndGlyphs">[M3] PTA29</text>
<text x="353" y="647" textLength="52" lengthAdjust="spacingAndGlyphs">LED_Q172</text>
<text x="425" y="647" textLength="52" lengthAdjust="spacingAndGlyphs">LED_Q172</text>
<text x="495" y="647" textLength="37" lengthAdjust="spacingAndGlyphs">Output</text>
<text x="555" y="647" class="i" textLength="19" lengthAdjust="spacingAndGlyphs">n/a</text>
<text x="621" y="647" class="i" textLength="43" lengthAdjust="spacingAndGlyphs">Enabled</text>
<text x="746" y="647" class="i" textLength="40" lengthAdjust="spacingAndGlyphs">Disable</text>
<text x="859" y="647" textLength="42" lengthAdjust="spacingAndGlyphs">Enabled</text>
<text x="974" y="647" class="i" textLength="49" lengthAdjust="spacingAndGlyphs">Pulldown</text>
<text x="1054" y="647" class="i" textLength="46" lengthAdjust="spacingAndGlyphs">Disabled</text>

<rect x="268" y="653" width="36" height="17" fill="#ffb6b6"/>
<text x="24" y="666" textLength="12" lengthAdjust="spacingAndGlyphs">R1</text>
<text x="64" y="666" textLength="29" lengthAdjust="spacingAndGlyphs">SIUL2</text>
<text x="135" y="666" textLength="42" lengthAdjust="spacingAndGlyphs">gpio, 50</text>
<text x="199" y="665" class="a" textLength="11" lengthAdjust="spacingAndGlyphs">-&gt;</text>
<text x="245" y="666" textLength="58" lengthAdjust="spacingAndGlyphs">[R1] PTB18</text>
<text x="353" y="666" textLength="52" lengthAdjust="spacingAndGlyphs">LED_Q257</text>
<text x="425" y="666" textLength="52" lengthAdjust="spacingAndGlyphs">LED_Q257</text>
<text x="495" y="666" textLength="37" lengthAdjust="spacingAndGlyphs">Output</text>
<text x="555" y="666" class="i" textLength="19" lengthAdjust="spacingAndGlyphs">n/a</text>
<text x="621" y="666" class="i" textLength="43" lengthAdjust="spacingAndGlyphs">Enabled</text>
<text x="746" y="666" class="i" textLength="40" lengthAdjust="spacingAndGlyphs">Disable</text>
<text x="859" y="666" textLength="42" lengthAdjust="spacingAndGlyphs">Enabled</text>
<text x="974" y="666" class="i" textLength="49" lengthAdjust="spacingAndGlyphs">Pulldown</text>
<text x="1054" y="666" class="i" textLength="46" lengthAdjust="spacingAndGlyphs">Disabled</text>

<rect x="18" y="672" width="39" height="16" fill="#0070d0"/>
<rect x="420" y="672" width="69" height="16" fill="#0070d0"/>
<rect x="134" y="673" width="46" height="15" fill="#ffff4d"/>
<rect x="268" y="673" width="36" height="15" fill="#ffff00"/>
<path d="M18 672.500H1134M18 688.500H1134" stroke="#000" stroke-dasharray="1 1"/>
<text x="24" y="685" textLength="14" lengthAdjust="spacingAndGlyphs">R9</text>
<text x="64" y="685" textLength="29" lengthAdjust="spacingAndGlyphs">SIUL2</text>
<text x="135" y="685" textLength="39" lengthAdjust="spacingAndGlyphs">eirq, 13</text>
<text x="199" y="684" class="a" textLength="11" lengthAdjust="spacingAndGlyphs">&lt;-</text>
<text x="245" y="685" textLength="58" lengthAdjust="spacingAndGlyphs">[R9] PTB26</text>
<text x="353" y="685" textLength="55" lengthAdjust="spacingAndGlyphs">SW4_Q257</text>
<text x="425" y="685" textLength="55" lengthAdjust="spacingAndGlyphs">SW4_Q257</text>
<text x="495" y="685" class="i" textLength="28" lengthAdjust="spacingAndGlyphs">Input</text>
<text x="555" y="685" class="i" textLength="19" lengthAdjust="spacingAndGlyphs">n/a</text>
<text x="621" y="685" class="i" textLength="46" lengthAdjust="spacingAndGlyphs">Disabled</text>
<text x="746" y="685" class="i" textLength="40" lengthAdjust="spacingAndGlyphs">Disable</text>
<text x="859" y="685" class="i" textLength="43" lengthAdjust="spacingAndGlyphs">Enabled</text>
<text x="974" y="685" class="i" textLength="49" lengthAdjust="spacingAndGlyphs">Pulldown</text>
<text x="1054" y="685" class="i" textLength="46" lengthAdjust="spacingAndGlyphs">Disabled</text>
<path d="M63 693H307M425 696H483" stroke="#aaa" stroke-width="2" filter="url(#bl)"/>
<path d="M63 690H307M425 692.500H483" stroke="#f43c3c" stroke-width="1.500"/>

<!-- screenshot frame: top & left black lines, torn right and bottom edges -->
<rect x="0" y="0" width="1152" height="1" fill="#000"/>
<rect x="0" y="0" width="1" height="704" fill="#000"/>
<path d="M-10 703H1151V-10H1175V725H-10Z" fill="#fff" stroke="#000" stroke-width="1" filter="url(#tear)"/>
</svg>
</body></html>
